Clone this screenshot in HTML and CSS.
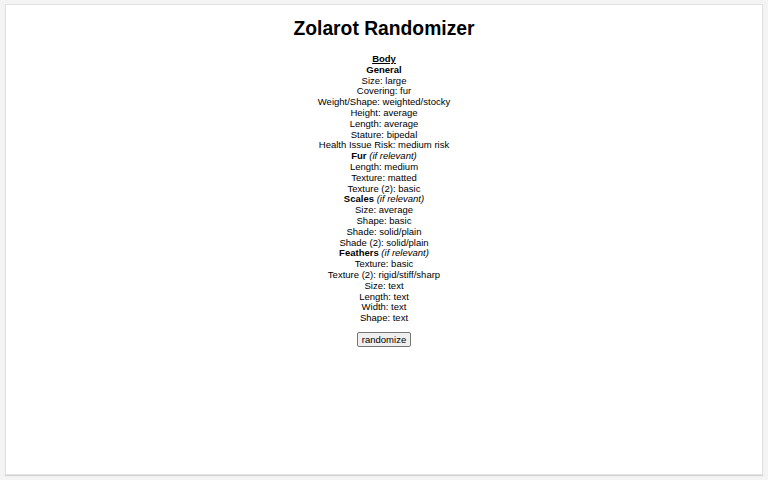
FILE: index.html
```html
<!DOCTYPE html>
<html>
<head>
<meta charset="utf-8">
<link rel="stylesheet" href="styles.css">
</head>
<body>
<div class="card">
  <h1 class="title">Zolarot Randomizer</h1>
  <div class="traits">
    <div class="head"><u><b>Body</b></u></div>
    <div class="head"><b>General</b></div>
    <div>Size: large</div>
    <div>Covering: fur</div>
    <div>Weight/Shape: weighted/stocky</div>
    <div>Height: average</div>
    <div>Length: average</div>
    <div>Stature: bipedal</div>
    <div>Health Issue Risk: medium risk</div>
    <div class="head"><b>Fur</b> <i>(if relevant)</i></div>
    <div>Length: medium</div>
    <div>Texture: matted</div>
    <div>Texture (2): basic</div>
    <div class="head"><b>Scales</b> <i>(if relevant)</i></div>
    <div>Size: average</div>
    <div>Shape: basic</div>
    <div>Shade: solid/plain</div>
    <div>Shade (2): solid/plain</div>
    <div class="head"><b>Feathers</b> <i>(if relevant)</i></div>
    <div>Texture: basic</div>
    <div>Texture (2): rigid/stiff/sharp</div>
    <div>Size: text</div>
    <div>Length: text</div>
    <div>Width: text</div>
    <div>Shape: text</div>
  </div>
  <button class="btn">randomize</button>
</div>
</body>
</html>
```
FILE: styles.css
```css
html, body {
  margin: 0;
  padding: 0;
}
body {
  background: #f4f4f4;
  padding: 4px;
  height: 480px;
  box-sizing: border-box;
  font-family: "Liberation Sans", Arial, sans-serif;
  color: #000;
}
.card {
  background: #fff;
  border: 1px solid #e2e2e2;
  box-shadow: 0 1px 1px #d4d4d4;
  height: 471px;
  box-sizing: border-box;
  display: flex;
  flex-direction: column;
  align-items: center;
  margin: 0 1px;
}
.title {
  font-size: 19.3px;
  font-weight: bold;
  margin: 13px 0 0 0;
  line-height: 22px;
}
.traits {
  margin-top: 14px;
  font-size: 9.5px;
  line-height: 10.8px;
  text-align: center;
}
.btn {
  margin-top: 8px;
  font-family: "Liberation Sans", Arial, sans-serif;
  font-size: 9.5px;
  padding: 1px 4px;
  background: #efefef;
  border: 1px solid #767676;
  border-radius: 2px;
  color: #000;
}
```
